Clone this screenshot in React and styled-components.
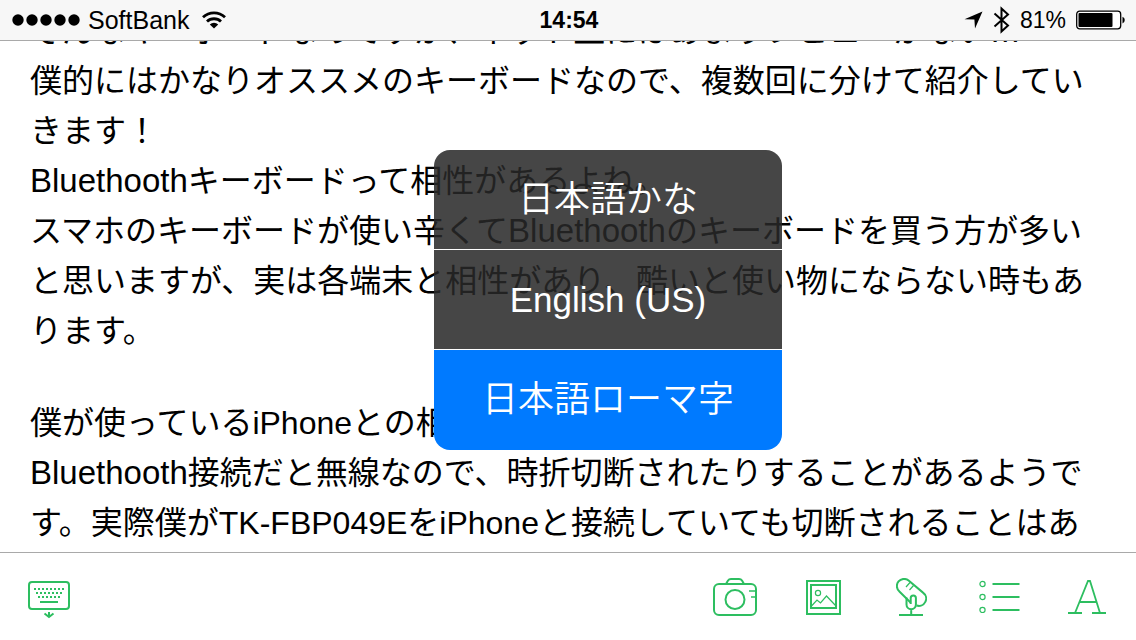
import React, { useState } from 'react';
import styled, { createGlobalStyle } from 'styled-components';

const GlobalStyle = createGlobalStyle`
  * {
    box-sizing: border-box;
  }
  html,
  body,
  #root {
    height: 100%;
    margin: 0;
  }
  body {
    background: #fff;
    color: #000;
    font-family: 'Liberation Sans', 'Noto Sans CJK JP', sans-serif;
  }
`;

const Screen = styled.div`
  position: relative;
  display: flex;
  flex-direction: column;
  height: 100vh;
  overflow: hidden;
`;

const StatusBar = styled.header`
  display: grid;
  grid-template-columns: 1fr auto 1fr;
  align-items: center;
  flex: none;
  height: 41px;
  padding: 0 10px 0 12px;
  background: #f7f7f7;
  border-bottom: 1px solid #a9a9a9;
  font-size: 23px;
  line-height: 40px;
`;

const StatusGroup = styled.div`
  display: flex;
  align-items: center;
  justify-content: ${(props) => (props.$end ? 'flex-end' : 'flex-start')};
  gap: ${(props) => (props.$end ? '10px' : '8px')};
  svg {
    flex: none;
  }
`;

const Carrier = styled.span`
  padding-right: 4px;
  font-size: 25px;
`;

const Clock = styled.time`
  font-weight: 700;
`;

const Note = styled.main`
  display: flex;
  flex-direction: column;
  justify-content: flex-end;
  flex: 1;
  min-height: 0;
  overflow: hidden;
  padding: 0 30px 4px;
`;

const Paragraph = styled.p`
  margin: 0 0 ${(props) => (props.$last ? '0' : '42px')};
  font-size: 32px;
  line-height: 50px;
  white-space: nowrap;
`;

const Latin = styled.span`
  font-size: 33px;
`;

const Toolbar = styled.footer`
  display: flex;
  align-items: center;
  justify-content: space-between;
  flex: none;
  height: 88px;
  padding: 0 27px;
  border-top: 1px solid #a9a9a9;
  background: #fff;
`;

const ToolGroup = styled.div`
  display: flex;
  align-items: center;
  gap: 44px;
`;

const ToolButton = styled.button`
  display: flex;
  justify-content: center;
  width: 44px;
  padding: 0;
  border: 0;
  background: none;
  color: #2dbe60;
  cursor: pointer;
  svg {
    flex: none;
    fill: none;
    stroke: currentColor;
    stroke-width: 2;
  }
`;

const LanguageMenu = styled.div`
  position: absolute;
  top: 150px;
  left: calc(50% - 134px);
  width: 348px;
  border-radius: 16px;
  overflow: hidden;
`;

const LanguageOption = styled.button`
  display: block;
  width: 100%;
  height: 100px;
  padding: 0;
  border: 0;
  border-bottom: ${(props) => (props.$last ? '0' : '1px solid #fff')};
  background: ${(props) => (props.$active ? '#007aff' : 'rgba(40, 40, 40, 0.86)')};
  background-clip: padding-box;
  color: #fff;
  font-family: inherit;
  font-size: ${(props) => (props.$cjk ? '36px' : '35px')};
  font-weight: ${(props) => (props.$cjk ? 350 : 400)};
  line-height: 48px;
  cursor: pointer;
`;

const languages = ['日本語かな', 'English (US)', '日本語ローマ字'];

function SignalDots() {
  return (
    <svg width="68" height="12" viewBox="0 0 68 12" aria-hidden="true">
      {[6, 20, 34, 48, 62].map((cx) => (
        <circle key={cx} cx={cx} cy="6" r="5.7" />
      ))}
    </svg>
  );
}

function WifiIcon() {
  return (
    <svg width="26" height="20" viewBox="0 0 26 20" aria-hidden="true">
      <path d="M2 7.2a16 16 0 0 1 22 0M6 11.6a10 10 0 0 1 14 0" fill="none" stroke="#000" strokeWidth="2.8" />
      <path d="M13 18.6l-4.2-4.2a6 6 0 0 1 8.4 0z" />
    </svg>
  );
}

function LocationIcon() {
  return (
    <svg width="19" height="18" viewBox="0 0 19 18" aria-hidden="true">
      <path d="M18.5 0.5L11 17.5L10.4 8.6L0.5 8.2z" />
    </svg>
  );
}

function BluetoothIcon() {
  return (
    <svg width="17" height="28" viewBox="0 0 17 28" aria-hidden="true">
      <path d="M1.5 7.5L15 19.5L8.5 25.5V2.5L15 8.5L1.5 20.5" fill="none" stroke="#000" strokeWidth="2" />
    </svg>
  );
}

function BatteryIcon() {
  return (
    <svg width="50" height="20" viewBox="0 0 50 20" aria-hidden="true">
      <rect x="0.7" y="1.2" width="44" height="17.6" rx="3" fill="#fff" stroke="#000" strokeWidth="1.3" />
      <rect x="2.5" y="3" width="34" height="14" rx="1" />
      <path d="M46.5 6.8a3 3.4 0 0 1 0 6.6z" />
    </svg>
  );
}

function KeyboardIcon() {
  return (
    <svg width="42" height="45" viewBox="0 -7 42 45" aria-hidden="true">
      <rect x="1" y="1" width="40" height="27" rx="3" />
      <path d="M6 8h31M8 12h27M10 16h23" strokeDasharray="2 2" />
      <path d="M12 21h18M21 31v5M16.5 32.5l4.5 3.5l4.5-3.5" />
    </svg>
  );
}

function CameraIcon() {
  return (
    <svg width="44" height="38" viewBox="0 0 44 38" aria-hidden="true">
      <path d="M13 6l2-3.5q1-1.5 3-1.5h8q2 0 3 1.5l2 3.5" />
      <rect x="1" y="6" width="42" height="31" rx="5" />
      <circle cx="22" cy="21.5" r="9.5" />
      <path d="M36 13h7M38 19h5" strokeWidth="1.4" />
    </svg>
  );
}

function PictureIcon() {
  return (
    <svg width="35" height="36" viewBox="0 -1 35 36" aria-hidden="true">
      <rect x="1" y="1" width="33" height="33" />
      <rect x="5" y="5" width="25" height="23" />
      <circle cx="12" cy="13" r="2.6" strokeWidth="1.2" />
      <path d="M5.5 26l5.5-6l3.5 3l6-7l9.5 10" strokeWidth="1.2" />
    </svg>
  );
}

function MicIcon() {
  return (
    <svg width="31" height="38" viewBox="0 0 31 38" aria-hidden="true">
      <path d="M14.500 24.500L3.400 13.500A7 7 0 0 1 12.600 2.600L27 14.600A7.300 7.300 0 0 1 20.500 27.500" />
      <path d="M10.500 19.500v7a4.700 4.700 0 0 0 9.400 0v-6.500a2.600 2.600 0 0 0-5.200 0v6M15.200 31v6M3 37h24" />
      <path d="M10 9l4-4.500M13.500 12l4-4.500" strokeWidth="1.2" />
    </svg>
  );
}

function ListIcon() {
  return (
    <svg width="41" height="33" viewBox="0 0 41 33" aria-hidden="true">
      {[4, 17, 30].map((y) => (
        <g key={y}>
          <circle cx="3.5" cy={y} r="2.6" strokeWidth="1.2" />
          <path d={`M13.5 ${y}h27`} />
        </g>
      ))}
    </svg>
  );
}

function TextStyleIcon() {
  return (
    <svg width="38" height="34" viewBox="0 0 38 34" aria-hidden="true">
      <path d="M0 33h14M24 33h14" />
      <path d="M7 33L20 1h2L32 33M12 22h17" strokeWidth="1.8" />
    </svg>
  );
}

export default function App() {
  const [selected, setSelected] = useState(languages[2]);

  return (
    <>
      <GlobalStyle />
      <Screen>
        <StatusBar>
          <StatusGroup>
            <SignalDots />
            <Carrier>SoftBank</Carrier>
            <WifiIcon />
          </StatusGroup>
          <Clock>14:54</Clock>
          <StatusGroup $end>
            <LocationIcon />
            <BluetoothIcon />
            <span>81%</span>
            <BatteryIcon />
          </StatusGroup>
        </StatusBar>

        <Note>
          <Paragraph>
            そんなキーボードなのですが、ネット上にはあまりレビューがない…
            <br />
            僕的にはかなりオススメのキーボードなので、複数回に分けて紹介してい
            <br />
            きます！
            <br />
            <Latin>Bluethooth</Latin>キーボードって相性があるよね。
            <br />
            スマホのキーボードが使い辛くて<Latin>Bluethooth</Latin>のキーボードを買う方が多い
            <br />
            と思いますが、実は各端末と相性があり、酷いと使い物にならない時もあ
            <br />
            ります。
          </Paragraph>
          <Paragraph $last>
            僕が使っているiPhoneとの相性は良いのですが、
            <br />
            <Latin>Bluethooth</Latin>接続だと無線なので、時折切断されたりすることがあるようで
            <br />
            す。実際僕がTK-FBP049EをiPhoneと接続していても切断されることはあ
          </Paragraph>
        </Note>

        <Toolbar>
          <ToolButton type="button" aria-label="キーボードを隠す">
            <KeyboardIcon />
          </ToolButton>
          <ToolGroup>
            <ToolButton type="button" aria-label="カメラ">
              <CameraIcon />
            </ToolButton>
            <ToolButton type="button" aria-label="写真">
              <PictureIcon />
            </ToolButton>
            <ToolButton type="button" aria-label="録音">
              <MicIcon />
            </ToolButton>
            <ToolButton type="button" aria-label="リスト">
              <ListIcon />
            </ToolButton>
            <ToolButton type="button" aria-label="書式">
              <TextStyleIcon />
            </ToolButton>
          </ToolGroup>
        </Toolbar>

        <LanguageMenu role="group" aria-label="入力言語">
          {languages.map((name, i) => (
            <LanguageOption
              key={name}
              type="button"
              $active={name === selected}
              $cjk={name.startsWith('日')}
              $last={i === languages.length - 1}
              aria-pressed={name === selected}
              onClick={() => setSelected(name)}
            >
              {name}
            </LanguageOption>
          ))}
        </LanguageMenu>
      </Screen>
    </>
  );
}
